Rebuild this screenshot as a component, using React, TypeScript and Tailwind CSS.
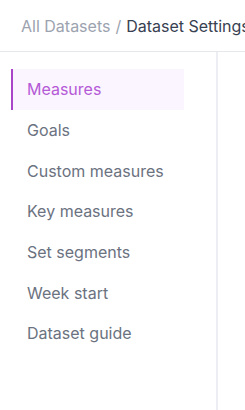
const ITEMS = ["Measures", "Goals", "Custom measures", "Key measures", "Set segments", "Week start", "Dataset guide"];

export default function App() {
  const active = "Measures";
  return (
    <div className="flex h-[410px] w-[245px] flex-col overflow-hidden bg-white font-['Inter',sans-serif]">
      <div className="flex h-[52px] shrink-0 items-center whitespace-nowrap border-b border-[#e5e7eb] pl-[21px] text-[16px]">
        <span className="text-[#9ca3af]">All Datasets</span>
        <span className="ml-[5px] text-[#9ca3af]">/</span>
        <span className="ml-[5px] text-[#374151]">Dataset Settings</span>
      </div>
      <div className="flex flex-1">
        <nav className="flex w-[218px] shrink-0 flex-col border-r-2 border-[#eceef3] pt-[17px] pl-[11px]">
          {ITEMS.map((item) => {
            const on = item === active;
            return (
              <div
                key={item}
                className={
                  on
                    ? "flex h-[40.66px] w-[173px] items-center border-l-2 border-[#a845c9] bg-[#fbf5ff] pl-[14px] text-[16px] text-[#b45ad6]"
                    : "flex h-[40.66px] w-[173px] items-center border-l-2 border-transparent pl-[14px] text-[16px] text-[#6b7280]"
                }
              >
                {item}
              </div>
            );
          })}
        </nav>
        <div className="flex-1" />
      </div>
    </div>
  );
}
